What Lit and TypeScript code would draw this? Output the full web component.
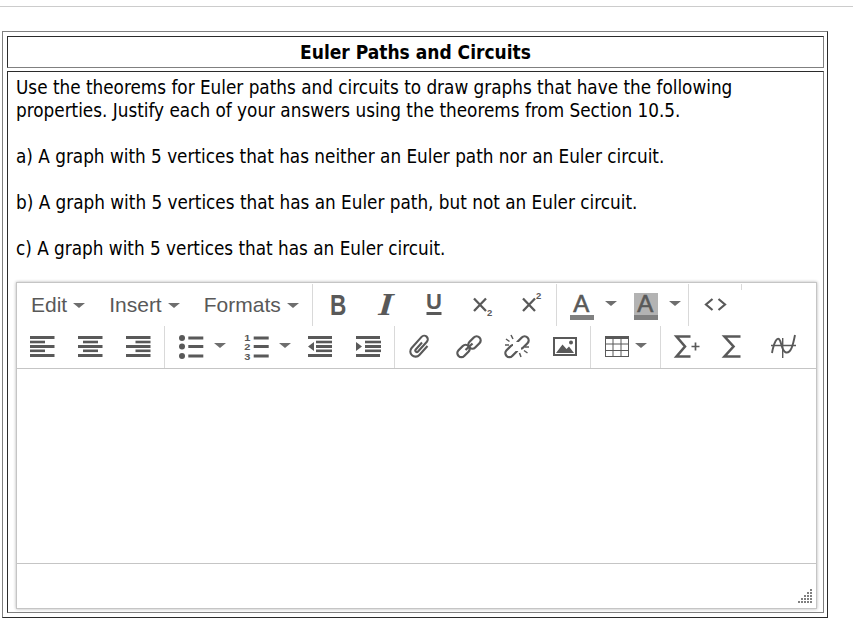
import { LitElement, html, css, svg } from "lit";
import { customElement } from "lit/decorators.js";

const C = "#595959";
const bars = (rows: [number, number, number, number][], fill = C) =>
  rows.map(([x, y, w, h]) => svg`<rect x=${x} y=${y} width=${w} height=${h} fill=${fill}></rect>`);
const ys = [1, 5.7, 10, 14.5, 19];
const hs = [3, 2.6, 3, 2.6, 3];
const align = (sx: number) =>
  bars(ys.map((y, i) => (i % 2 ? [sx, y, 15, hs[i]] : [0, y, 24.5, hs[i]])) as any);
const stroke = (d: string, w = 2, col = C) =>
  svg`<path d=${d} fill="none" stroke=${col} stroke-width=${w}></path>`;
const txt = (t: string, x: number, y: number, size: number, fam: string) =>
  svg`<text x=${x} y=${y} font-size=${size} font-family=${fam} font-weight="700" fill=${C}>${t}</text>`;
const digit = (t: string, y: number) =>
  svg`<text transform="translate(0.3 ${y}) scale(1.35 1)" font-size="8.2" font-family=${SANS} font-weight="700" fill=${C}>${t}</text>`;
const SANS = "'Liberation Sans', sans-serif";
const SERIF = "'Liberation Serif', serif";

const letterA = svg`<text x="3.2" y="19" font-size="24" font-family=${SANS} fill=${C} stroke=${C} stroke-width=".6">A</text>`;
const listBars = (x: number) =>
  bars([[x, 1.5, 15, 3], [x, 10, 15, 3], [x, 19.5, 15, 3]] as any);
const indentLines = (x: number) =>
  bars([[0, 1, 24, 3], [x, 5.7, 16, 2.6], [x, 10, 16, 3], [x, 14.5, 16, 2.6], [0, 19, 24, 3]] as any);
const linkA = svg`<rect x="10.5" y="3.5" width="14" height="8" rx="4" transform="rotate(-45 17.5 7.5)" fill="none" stroke=${C} stroke-width="2.3"></rect>`;
const linkB = svg`<rect x="-0.5" y="12" width="14" height="8" rx="4" transform="rotate(-45 6.5 16)" fill="none" stroke=${C} stroke-width="2.3"></rect>`;

const ICONS: Record<string, unknown> = {
  bold: svg`<text x="0" y="22" transform="translate(4 0) scale(.78 1)" font-size="29" font-family=${SANS} font-weight="700" fill=${C}>B</text>`,
  italic: svg`<text transform="translate(2.5 22) skewX(-16) scale(1.1 1)" font-size="32" font-family=${SERIF} font-weight="700" fill=${C}>I</text>`,
  underline: svg`${txt("U", 4, 15.8, 22, SANS)}<rect x="4.5" y="19" width="15" height="3" fill=${C}></rect>`,
  sub: svg`${stroke("M4 5.5 L16 18 M16 5.5 L4 18", 2.3)}${txt("2", 17, 23, 9.5, SANS)}`,
  sup: svg`${stroke("M5 5.5 L17 18 M17 5.5 L5 18", 2.3)}${txt("2", 18, 5.5, 9.5, SANS)}`,
  forecolor: svg`${letterA}<rect x="0" y="22" width="24" height="5" fill="#808080"></rect>`,
  backcolor: svg`<rect x="0" y="0" width="24" height="22" fill="#b3b3b3"></rect>${letterA}<rect x="0" y="22" width="24" height="5" fill="#808080"></rect>`,
  code: stroke("M9.5 6 L3 11.5 L9.5 17 M15.5 6 L22 11.5 L15.5 17", 2.2),
  alignleft: align(0),
  aligncenter: align(5),
  alignright: align(9.5),
  bullist: svg`<circle cx="3" cy="3" r="3" fill=${C}></circle><circle cx="3" cy="11.5" r="3" fill=${C}></circle><circle cx="3" cy="21" r="3" fill=${C}></circle>${listBars(9.3)}`,
  numlist: svg`${digit("1", 5.5)}${digit("2", 15)}${digit("3", 24.5)}${listBars(9.7)}`,
  outdent: svg`${indentLines(8)}<path d="M0 11.5 L6 7 V16 Z" fill=${C}></path>`,
  indent: svg`${indentLines(9)}<path d="M6 11.5 L0 7 V16 Z" fill=${C}></path>`,
  attach: svg`<g transform="rotate(42 11 12) translate(-1.2 -1.5) scale(1.1)">${stroke("M15.5 7 V18 A4.7 4.7 0 0 1 6 18 V4.5 A3.2 3.2 0 0 1 12.5 4.5 V16.5 A1.4 1.4 0 0 1 9.7 16.5 V8", 1.9)}</g>`,
  link: svg`${linkA}${linkB}${stroke("M8.5 15 L15.5 8.5", 2.3)}`,
  unlink: svg`
    ${linkA}${linkB}
    <rect x="8" y="7" width="8" height="9" fill="#fff"></rect>
    ${stroke("M6 0 L8 4 M1 4 L4.5 6.5 M0 10 H4 M16 22 L14.5 18 M22.5 18 L19 15.5 M24 12 H20", 1.5)}`,
  image: svg`<rect x="1" y="3" width="22" height="17" fill="none" stroke=${C} stroke-width="2"></rect><path d="M3 18 L9.5 9.5 L13.5 14 L16 11.5 L21 18 Z" fill=${C}></path><circle cx="18" cy="7.5" r="2" fill=${C}></circle>`,
  table: svg`<rect x=".5" y="1.5" width="23" height="20" fill="none" stroke=${C} stroke-width="1"></rect><rect x="0" y="1" width="24" height="3" fill=${C}></rect>${stroke("M8 2 V22 M16 2 V22 M1 9 H23 M1 15.5 H23", 1)}`,
  sigmaplus: svg`${stroke("M15.5 1.5 H1.5 L10 11.5 L1.5 21.5 H15.5", 2.6)}${stroke("M16.5 11.5 H24.5 M20.5 7.5 V15.5", 1.7)}`,
  sigma: stroke("M17.5 1.5 H1.5 L10.5 11.5 L1.5 21.5 H17.5", 2.6),
  graph: svg`${stroke("M1 18 C3 7 6 2.5 8 4 C11 7 10 16 15 17.5 C20 18.5 22 10 24 0", 1.9)}${stroke("M11.7 3 V23 M0 10.5 H25", 1.4)}`,
};

const icon = (name: string) => html`<svg class="ic" width="24" height="24" viewBox="0 0 24 24">${ICONS[name]}</svg>`;
const btn = (name: string) => html`<div class="btn">${icon(name)}</div>`;
const split = (name: string) => html`<div class="btn split">${icon(name)}<span class="caret"></span></div>`;
const menu = (label: string) => html`<div class="menu">${label}<span class="caret"></span></div>`;

const grip: [number, number][] = [];
for (let r = 0; r < 5; r++) for (let c = 4 - r; c < 5; c++) grip.push([c * 3, r * 3]);

@customElement("app-root")
export class AppRoot extends LitElement {
  static styles = css`
    :host { display: block; background: #fff; height: 620px; overflow: hidden; }
    .rule { height: 1px; margin-top: 6px; background: #ccc; }
    .outer {
      box-sizing: border-box; width: 826px; height: 587px; margin: 24px 0 0 2px;
      padding: 4px 3px 4px 4px; display: flex; flex-direction: column; gap: 3px;
      border: 1px solid; border-color: #808080 #2b2b2b #2b2b2b #808080;
      font-family: "DejaVu Sans", sans-serif; color: #000;
    }
    .cell { border: 1px solid; border-color: #2b2b2b #808080 #808080 #2b2b2b; }
    .title {
      box-sizing: border-box; height: 32px; line-height: 30px; text-align: center;
      font-weight: 700; font-size: 19px; font-stretch: condensed;
    }
    .body { flex: 1; padding: 4px 6px 3px 8px; display: flex; flex-direction: column; font-size: 18.76px; line-height: 23px; font-stretch: condensed; }
    p { margin: 0 0 23px; white-space: nowrap; }
    p.last { margin-bottom: 22px; }
    .editor {
      flex: 1; display: flex; flex-direction: column; border: 1px solid #c5c5c5;
      box-shadow: 0 0 3px rgba(0, 0, 0, .3); background: #fff;
    }
    .toolbar { padding-top: 1px; border-bottom: 1px solid #c5c5c5; }
    .row { display: flex; height: 42px; }
    .group { display: flex; padding: 0 2px; border-left: 1px solid #d9d9d9; }
    .group:first-child { border-left: 0; padding-left: 1px; }
    .row1 .group:first-child { padding: 0 3px 0 0; }
    .row1 .pad1 { padding-left: 1px; }
    .row1 .tail { padding-right: 1px; }
    .pr1 { padding-right: 1px; }
    .stub { width: 1px; height: 6px; background: #d9d9d9; }
    .menu {
      display: flex; align-items: center; padding: 0 10px 0 14px;
      font: 21px "Liberation Sans", sans-serif; color: #595959;
    }
    .btn { box-sizing: border-box; width: 48px; padding: 9px 12px; display: flex; align-items: flex-start; flex: none; }
    .split { width: 64.5px; }
    .ic { flex: none; overflow: visible; display: block; }
    .caret {
      flex: none; width: 0; height: 0; margin-left: 6px;
      border-left: 6px solid transparent; border-right: 6px solid transparent; border-top: 5px solid #6e6e6e;
    }
    .split .caret { margin: 8px 0 0 11px; }
    .narrow .caret { margin-left: 6px; }
    .edit-area { flex: 1; border-bottom: 1px solid #c5c5c5; }
    .status { height: 39px; display: flex; justify-content: flex-end; align-items: flex-end; padding: 0 4px 5px 0; }
    .grip { display: block; }
  `;

  render() {
    return html`
      <div class="rule"></div>
      <div class="outer">
        <div class="cell title">Euler Paths and Circuits</div>
        <div class="cell body">
          <p>Use the theorems for Euler paths and circuits to draw graphs that have the following<br />properties. Justify each of your answers using the theorems from Section 10.5.</p>
          <p>a) A graph with 5 vertices that has neither an Euler path nor an Euler circuit.</p>
          <p>b) A graph with 5 vertices that has an Euler path, but not an Euler circuit.</p>
          <p class="last">c) A graph with 5 vertices that has an Euler circuit.</p>
          <div class="editor">
            <div class="toolbar">
              <div class="row row1">
                <div class="group">${menu("Edit")}${menu("Insert")}${menu("Formats")}</div>
                <div class="group pad1">${["bold", "italic", "underline", "sub", "sup"].map(btn)}</div>
                <div class="group pad1 tail">${split("forecolor")}${split("backcolor")}</div>
                <div class="group">${btn("code")}</div>
                <div class="stub"></div>
              </div>
              <div class="row">
                <div class="group">${["alignleft", "aligncenter", "alignright"].map(btn)}</div>
                <div class="group">${split("bullist")}${split("numlist")}${btn("outdent")}${btn("indent")}</div>
                <div class="group pr1">${["attach", "link", "unlink", "image"].map(btn)}</div>
                <div class="group narrow">${split("table")}</div>
                <div class="group">${["sigmaplus", "sigma", "graph"].map(btn)}</div>
              </div>
            </div>
            <div class="edit-area"></div>
            <div class="status">
              <svg class="grip" width="14" height="14" viewBox="0 0 14 14">
                ${grip.map(([x, y]) => svg`<rect x=${x} y=${y} width="2" height="2" fill="#808080"></rect>`)}
              </svg>
            </div>
          </div>
        </div>
      </div>
    `;
  }
}
